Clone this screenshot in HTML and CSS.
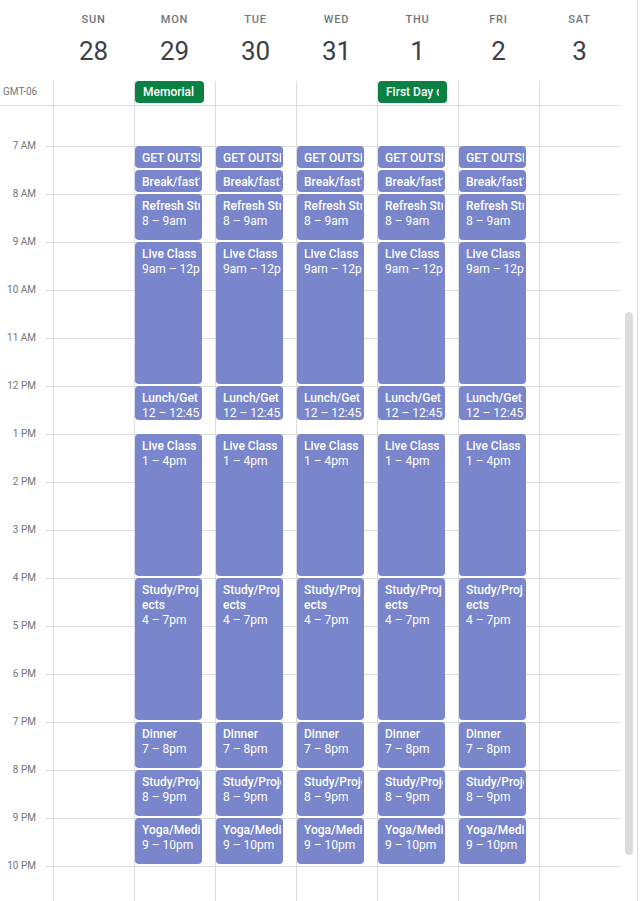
FILE: index.html
```html
<!DOCTYPE html>
<html lang="en">
<head>
<meta charset="utf-8">
<title>Week</title>
<link rel="stylesheet" href="styles.css">
</head>
<body>
<div class="cal">
  <div class="head">
    <div class="head-gutter"></div>
    <div class="day-head"><div class="dow">Sun</div><div class="dnum">28</div></div>
    <div class="day-head"><div class="dow">Mon</div><div class="dnum">29</div></div>
    <div class="day-head"><div class="dow">Tue</div><div class="dnum">30</div></div>
    <div class="day-head"><div class="dow">Wed</div><div class="dnum">31</div></div>
    <div class="day-head"><div class="dow">Thu</div><div class="dnum">1</div></div>
    <div class="day-head"><div class="dow">Fri</div><div class="dnum">2</div></div>
    <div class="day-head"><div class="dow">Sat</div><div class="dnum">3</div></div>
  </div>
  <div class="allday">
    <div class="tz">GMT-06</div>
    <div class="ad-cell"></div>
    <div class="ad-cell"><div class="chip"><span>Memorial Day</span></div></div>
    <div class="ad-cell"></div>
    <div class="ad-cell"></div>
    <div class="ad-cell"><div class="chip"><span>First Day of School</span></div></div>
    <div class="ad-cell"></div>
    <div class="ad-cell"></div>
  </div>
  <div class="body">
    <div class="hours">
      <div class="hour">7 AM</div>
      <div class="hour">8 AM</div>
      <div class="hour">9 AM</div>
      <div class="hour">10 AM</div>
      <div class="hour">11 AM</div>
      <div class="hour">12 PM</div>
      <div class="hour">1 PM</div>
      <div class="hour">2 PM</div>
      <div class="hour">3 PM</div>
      <div class="hour">4 PM</div>
      <div class="hour">5 PM</div>
      <div class="hour">6 PM</div>
      <div class="hour">7 PM</div>
      <div class="hour">8 PM</div>
      <div class="hour">9 PM</div>
      <div class="hour">10 PM</div>
      <div class="hour">11 PM</div>
    </div>
    <div class="col"></div>
    <div class="col">
      <div class="ev h30"><div class="t">GET OUTSIDE</div></div>
      <div class="ev h30"><div class="t">Break/fast?</div></div>
      <div class="ev h60"><div class="t">Refresh Study</div><div class="tm">8 – 9am</div></div>
      <div class="ev h180 long"><div class="t">Live Class</div><div class="tm">9am – 12pm</div></div>
      <div class="ev h45"><div class="t">Lunch/Get outside</div><div class="tm">12 – 12:45pm</div></div>
      <div class="ev h180 long"><div class="t">Live Class</div><div class="tm">1 – 4pm</div></div>
      <div class="ev h180 long"><div class="t">Study/Projects</div><div class="tm">4 – 7pm</div></div>
      <div class="ev h60"><div class="t">Dinner</div><div class="tm">7 – 8pm</div></div>
      <div class="ev h60"><div class="t">Study/Projects</div><div class="tm">8 – 9pm</div></div>
      <div class="ev h60"><div class="t">Yoga/Meditation</div><div class="tm">9 – 10pm</div></div>
    </div>
    <div class="col">
      <div class="ev h30"><div class="t">GET OUTSIDE</div></div>
      <div class="ev h30"><div class="t">Break/fast?</div></div>
      <div class="ev h60"><div class="t">Refresh Study</div><div class="tm">8 – 9am</div></div>
      <div class="ev h180 long"><div class="t">Live Class</div><div class="tm">9am – 12pm</div></div>
      <div class="ev h45"><div class="t">Lunch/Get outside</div><div class="tm">12 – 12:45pm</div></div>
      <div class="ev h180 long"><div class="t">Live Class</div><div class="tm">1 – 4pm</div></div>
      <div class="ev h180 long"><div class="t">Study/Projects</div><div class="tm">4 – 7pm</div></div>
      <div class="ev h60"><div class="t">Dinner</div><div class="tm">7 – 8pm</div></div>
      <div class="ev h60"><div class="t">Study/Projects</div><div class="tm">8 – 9pm</div></div>
      <div class="ev h60"><div class="t">Yoga/Meditation</div><div class="tm">9 – 10pm</div></div>
    </div>
    <div class="col">
      <div class="ev h30"><div class="t">GET OUTSIDE</div></div>
      <div class="ev h30"><div class="t">Break/fast?</div></div>
      <div class="ev h60"><div class="t">Refresh Study</div><div class="tm">8 – 9am</div></div>
      <div class="ev h180 long"><div class="t">Live Class</div><div class="tm">9am – 12pm</div></div>
      <div class="ev h45"><div class="t">Lunch/Get outside</div><div class="tm">12 – 12:45pm</div></div>
      <div class="ev h180 long"><div class="t">Live Class</div><div class="tm">1 – 4pm</div></div>
      <div class="ev h180 long"><div class="t">Study/Projects</div><div class="tm">4 – 7pm</div></div>
      <div class="ev h60"><div class="t">Dinner</div><div class="tm">7 – 8pm</div></div>
      <div class="ev h60"><div class="t">Study/Projects</div><div class="tm">8 – 9pm</div></div>
      <div class="ev h60"><div class="t">Yoga/Meditation</div><div class="tm">9 – 10pm</div></div>
    </div>
    <div class="col">
      <div class="ev h30"><div class="t">GET OUTSIDE</div></div>
      <div class="ev h30"><div class="t">Break/fast?</div></div>
      <div class="ev h60"><div class="t">Refresh Study</div><div class="tm">8 – 9am</div></div>
      <div class="ev h180 long"><div class="t">Live Class</div><div class="tm">9am – 12pm</div></div>
      <div class="ev h45"><div class="t">Lunch/Get outside</div><div class="tm">12 – 12:45pm</div></div>
      <div class="ev h180 long"><div class="t">Live Class</div><div class="tm">1 – 4pm</div></div>
      <div class="ev h180 long"><div class="t">Study/Projects</div><div class="tm">4 – 7pm</div></div>
      <div class="ev h60"><div class="t">Dinner</div><div class="tm">7 – 8pm</div></div>
      <div class="ev h60"><div class="t">Study/Projects</div><div class="tm">8 – 9pm</div></div>
      <div class="ev h60"><div class="t">Yoga/Meditation</div><div class="tm">9 – 10pm</div></div>
    </div>
    <div class="col">
      <div class="ev h30"><div class="t">GET OUTSIDE</div></div>
      <div class="ev h30"><div class="t">Break/fast?</div></div>
      <div class="ev h60"><div class="t">Refresh Study</div><div class="tm">8 – 9am</div></div>
      <div class="ev h180 long"><div class="t">Live Class</div><div class="tm">9am – 12pm</div></div>
      <div class="ev h45"><div class="t">Lunch/Get outside</div><div class="tm">12 – 12:45pm</div></div>
      <div class="ev h180 long"><div class="t">Live Class</div><div class="tm">1 – 4pm</div></div>
      <div class="ev h180 long"><div class="t">Study/Projects</div><div class="tm">4 – 7pm</div></div>
      <div class="ev h60"><div class="t">Dinner</div><div class="tm">7 – 8pm</div></div>
      <div class="ev h60"><div class="t">Study/Projects</div><div class="tm">8 – 9pm</div></div>
      <div class="ev h60"><div class="t">Yoga/Meditation</div><div class="tm">9 – 10pm</div></div>
    </div>
    <div class="col"></div>
    <div class="sbar"><div class="thumb"></div></div>
  </div>
</div>
</body>
</html>
```
FILE: styles.css
```css
html, body {
  margin: 0;
  padding: 0;
  background: #fff;
}
body {
  font-family: Roboto, "Liberation Sans", Arial, sans-serif;
}
.cal {
  width: 637px;
  height: 901px;
  border-right: 1px solid #dadce0;
  overflow: hidden;
}
.head {
  display: flex;
  height: 81px;
}
.head-gutter {
  width: 53px;
  flex: none;
}
.day-head {
  width: 81px;
  flex: none;
  text-align: center;
}
.dow {
  margin-top: 12px;
  line-height: 16px;
  font-size: 11px;
  font-weight: 500;
  letter-spacing: 0.8px;
  text-transform: uppercase;
  color: #70757a;
}
.dnum {
  font-size: 26px;
  line-height: 46px;
  color: #3c4043;
}
.allday {
  display: flex;
  width: 620px;
  height: 24px;
  border-bottom: 1px solid #dadce0;
}
.tz {
  width: 53px;
  flex: none;
  box-sizing: border-box;
  padding-left: 3px;
  font-size: 10px;
  line-height: 22px;
  color: #70757a;
}
.ad-cell {
  width: 81px;
  flex: none;
  box-sizing: border-box;
  border-left: 1px solid #dadce0;
}
.chip {
  margin-right: 11px;
  height: 22px;
  padding: 0 8px;
  background: #0b8043;
  border-radius: 4px;
  color: #fff;
  font-size: 12px;
  font-weight: 500;
  line-height: 22px;
}
.chip span {
  display: block;
  overflow: hidden;
  white-space: nowrap;
}
.body {
  display: flex;
  height: 795px;
  overflow: hidden;
  background-image: linear-gradient(to bottom, #dadce0 0, #dadce0 1px, transparent 1px, transparent 48px);
  background-size: 575px 48px;
  background-position: 45px 40px;
  background-repeat: repeat-y;
}
.hours {
  width: 53px;
  flex: none;
  box-sizing: border-box;
  padding-top: 34px;
}
.hour {
  height: 48px;
  box-sizing: border-box;
  padding-right: 17px;
  text-align: right;
  font-size: 10px;
  line-height: 12px;
  color: #70757a;
}
.col {
  width: 81px;
  flex: none;
  box-sizing: border-box;
  border-left: 1px solid #dadce0;
  padding-top: 40px;
  display: flex;
  flex-direction: column;
}
.ev {
  flex: none;
  box-sizing: border-box;
  margin: 0 13px 2px 0;
  padding: 5px 2px 0 7px;
  background: #7986cb;
  border-radius: 4px;
  color: #fff;
  font-size: 12px;
  line-height: 15px;
  overflow: hidden;
}
.ev .t {
  font-weight: 500;
  white-space: nowrap;
  overflow: hidden;
}
.ev.long .t {
  white-space: normal;
  word-break: break-all;
}
.ev .tm {
  white-space: nowrap;
  overflow: hidden;
}
.h30 { height: 22px; }
.h45 { height: 34px; margin-bottom: 14px; }
.h60 { height: 46px; }
.h180 { height: 142px; }
.sbar {
  width: 17px;
  flex: none;
}
.thumb {
  margin: 206px 0 0 5px;
  width: 8px;
  height: 543px;
  background: #dadce0;
  border-radius: 4px;
}
```
